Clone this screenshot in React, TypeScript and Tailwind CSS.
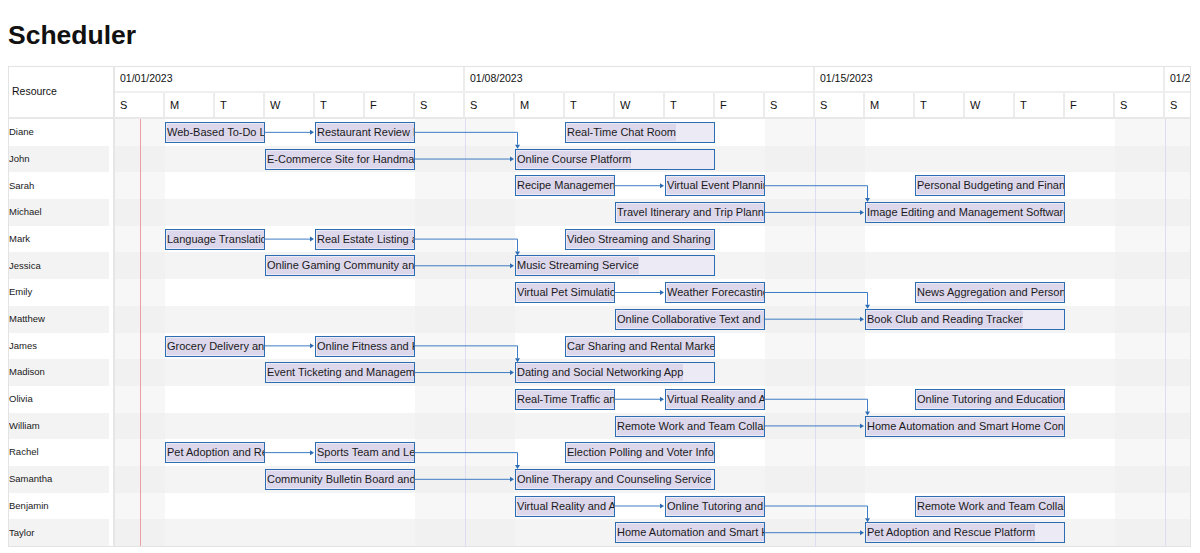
import React from 'react';

const DAY_W = 50;
const ROW_H = 26.69;
const DAYS = 28;

const resources = [
  'Diane', 'John', 'Sarah', 'Michael', 'Mark', 'Jessica', 'Emily', 'Matthew',
  'James', 'Madison', 'Olivia', 'William', 'Rachel', 'Samantha', 'Benjamin', 'Taylor',
];

type Task = { id: string; row: number; start: number; days: number; name: string };
type Link = { from: string; to: string };

// two alternating layouts, each spanning a pair of rows
const groupA: [number, string[], string[]][] = [
  [0, ['Web-Based To-Do List', 'Restaurant Review Platform', 'Real-Time Chat Room'], ['E-Commerce Site for Handmade Goods', 'Online Course Platform']],
  [4, ['Language Translation App', 'Real Estate Listing and Search', 'Video Streaming and Sharing Platform'], ['Online Gaming Community and Forum', 'Music Streaming Service']],
  [8, ['Grocery Delivery and Ordering', 'Online Fitness and Health Tracker', 'Car Sharing and Rental Marketplace'], ['Event Ticketing and Management', 'Dating and Social Networking App']],
  [12, ['Pet Adoption and Rescue Platform', 'Sports Team and League Management', 'Election Polling and Voter Information'], ['Community Bulletin Board and Classifieds', 'Online Therapy and Counseling Service']],
];

const groupB: [number, string[], string[]][] = [
  [2, ['Recipe Management and Sharing', 'Virtual Event Planning', 'Personal Budgeting and Finance Tracker'], ['Travel Itinerary and Trip Planning', 'Image Editing and Management Software']],
  [6, ['Virtual Pet Simulation', 'Weather Forecasting App', 'News Aggregation and Personalization'], ['Online Collaborative Text and Code Editor', 'Book Club and Reading Tracker']],
  [10, ['Real-Time Traffic and Navigation', 'Virtual Reality and Augmented Reality', 'Online Tutoring and Education Platform'], ['Remote Work and Team Collaboration', 'Home Automation and Smart Home Control']],
  [14, ['Virtual Reality and Augmented Reality', 'Online Tutoring and Education Platform', 'Remote Work and Team Collaboration'], ['Home Automation and Smart Home Control', 'Pet Adoption and Rescue Platform']],
];

const tasks: Task[] = [];
const links: Link[] = [];

groupA.forEach(([r, top, bottom]) => {
  tasks.push({ id: `${r}a`, row: r, start: 1, days: 2, name: top[0] });
  tasks.push({ id: `${r}b`, row: r, start: 4, days: 2, name: top[1] });
  tasks.push({ id: `${r}c`, row: r, start: 9, days: 3, name: top[2] });
  tasks.push({ id: `${r}d`, row: r + 1, start: 3, days: 3, name: bottom[0] });
  tasks.push({ id: `${r}e`, row: r + 1, start: 8, days: 4, name: bottom[1] });
  links.push({ from: `${r}a`, to: `${r}b` }, { from: `${r}b`, to: `${r}e` }, { from: `${r}d`, to: `${r}e` });
});

groupB.forEach(([r, top, bottom]) => {
  tasks.push({ id: `${r}a`, row: r, start: 8, days: 2, name: top[0] });
  tasks.push({ id: `${r}b`, row: r, start: 11, days: 2, name: top[1] });
  tasks.push({ id: `${r}c`, row: r, start: 16, days: 3, name: top[2] });
  tasks.push({ id: `${r}d`, row: r + 1, start: 10, days: 3, name: bottom[0] });
  tasks.push({ id: `${r}e`, row: r + 1, start: 15, days: 4, name: bottom[1] });
  links.push({ from: `${r}a`, to: `${r}b` }, { from: `${r}b`, to: `${r}e` }, { from: `${r}d`, to: `${r}e` });
});

const byId = Object.fromEntries(tasks.map((t) => [t.id, t]));
const weeks = ['01/01/2023', '01/08/2023', '01/15/2023', '01/22/2023'];
const dayLetters = ['S', 'M', 'T', 'W', 'T', 'F', 'S'];

function LinkArrow({ link }: { link: Link }) {
  const src = byId[link.from];
  const tgt = byId[link.to];
  const sx = (src.start + src.days) * DAY_W;
  const sy = src.row * ROW_H + ROW_H / 2;
  const tx = tgt.start * DAY_W;

  if (src.row === tgt.row) {
    return (
      <g>
        <path d={`M${sx} ${sy} H${tx - 5}`} stroke="#3d7cc4" strokeWidth={1} fill="none" />
        <polygon points={`${tx - 1},${sy} ${tx - 5},${sy - 2.5} ${tx - 5},${sy + 2.5}`} fill="#2b6cb3" />
      </g>
    );
  }

  const ax = tx + 2.5;
  const ty = tgt.row * ROW_H + 3;
  return (
    <g>
      <path d={`M${sx} ${sy} H${ax} V${ty - 4}`} stroke="#3d7cc4" strokeWidth={1} fill="none" />
      <polygon points={`${ax},${ty} ${ax - 2.5},${ty - 4} ${ax + 2.5},${ty - 4}`} fill="#2b6cb3" />
    </g>
  );
}

export default function App() {
  return (
    <div className="min-h-[553px] bg-white px-2 pt-5 font-['Liberation_Sans',Arial,sans-serif] text-[#111]">
      <h1 className="text-[26.5px] font-bold leading-[30px]">Scheduler</h1>

      <div className="mt-4 flex h-[481px] w-[1183px] overflow-hidden border border-[#e3e3e3]">
        {/* resource column */}
        <div className="w-[106px] shrink-0 border-r-2 border-[#e6e6e6]">
          <div className="flex h-[52px] items-center border-b-2 border-[#e8e8e8] pl-[3px] text-[10.5px]">
            Resource
          </div>
          {resources.map((name, i) => (
            <div
              key={name}
              className={`flex w-[100px] items-center text-[9.5px] text-[#1a1a1a] ${i % 2 ? 'bg-[#f3f3f3]' : 'bg-white'}`}
              style={{ height: ROW_H }}
            >
              {name}
            </div>
          ))}
        </div>

        {/* timeline */}
        <div className="min-w-0 flex-1 overflow-hidden">
          <div className="w-[1400px]">
            <div className="flex h-[26px] border-b-2 border-[#efefef]">
              {weeks.map((w) => (
                <div key={w} className="flex w-[350px] shrink-0 items-center border-r-2 border-[#ececec] pl-[5px] text-[10.5px]">
                  {w}
                </div>
              ))}
            </div>
            <div className="flex h-[26px] border-b-2 border-[#e8e8e8]">
              {Array.from({ length: DAYS }).map((_, d) => (
                <div key={d} className="flex w-[50px] shrink-0 items-center border-r-2 border-[#ececec] pl-[5px] text-[11px]">
                  {dayLetters[d % 7]}
                </div>
              ))}
            </div>

            <div className="relative">
              {resources.map((name, r) => (
                <div key={name} className="flex" style={{ height: ROW_H }}>
                  {Array.from({ length: DAYS }).map((_, d) => {
                    const weekend = d % 7 === 0 || d % 7 === 6;
                    const bg = r % 2 ? (weekend ? 'bg-[#f1f1f1]' : 'bg-[#f4f4f4]') : weekend ? 'bg-[#f7f7f7]' : 'bg-white';
                    return (
                      <div
                        key={d}
                        className={`w-[50px] shrink-0 ${bg} ${d % 7 === 0 && d > 0 ? 'border-l border-[#dcdcf3]' : ''}`}
                      />
                    );
                  })}
                </div>
              ))}

              <div className="absolute top-0 bottom-0 left-[25px] w-px bg-[#eb9ea4]" />

              {tasks.map((t) => (
                <div
                  key={t.id}
                  className="absolute flex h-[21px] items-center overflow-hidden border border-[#2b6cb3] bg-[#ecebf5] pl-px"
                  style={{ left: t.start * DAY_W, width: t.days * DAY_W, top: t.row * ROW_H + 3 }}
                >
                  <span className="whitespace-nowrap bg-[#ddd7ec] text-[11px] leading-[17px] text-[#1a1a1a]">{t.name}</span>
                </div>
              ))}

              <svg className="pointer-events-none absolute top-0 left-0" width={1400} height={ROW_H * 16}>
                {links.map((l) => (
                  <LinkArrow key={`${l.from}-${l.to}`} link={l} />
                ))}
              </svg>
            </div>
          </div>
        </div>
      </div>
    </div>
  );
}
